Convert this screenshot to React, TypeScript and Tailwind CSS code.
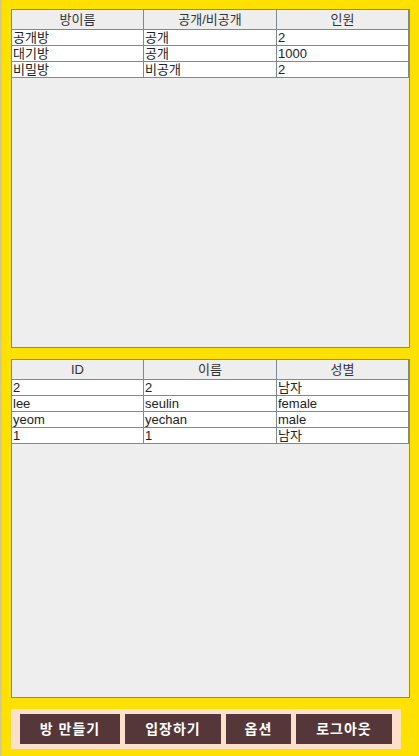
import React from "react";

const font = { fontFamily: '"Liberation Sans", "Noto Sans CJK KR", sans-serif' };

type Row = string[];

function Table({ headers, rows }: { headers: string[]; rows: Row[] }) {
  return (
    <div className="h-[339px] w-[399px] border border-[#7a8a99] bg-[#eeeeee] overflow-hidden">
      <div className="grid grid-cols-[132px_133px_132px] bg-[#eeeeee] border-b border-[#7a8a99]">
        {headers.map((h) => (
          <div
            key={h}
            className="h-[19px] flex items-center justify-center text-[13px] text-[#333333] border-r border-[#7a8a99]"
          >
            {h}
          </div>
        ))}
      </div>
      {rows.map((r, ri) => (
        <div key={ri} className="grid grid-cols-[132px_133px_132px] bg-white border-b border-[#7a8a99]">
          {r.map((c, ci) => (
            <div
              key={ci}
              className="h-[15px] flex items-center pl-[1px] text-[13px] leading-none text-[#222222] border-r border-[#7a8a99]"
            >
              {c}
            </div>
          ))}
        </div>
      ))}
    </div>
  );
}

export default function App() {
  const buttons = [
    { label: "방 만들기", w: "w-[100px]" },
    { label: "입장하기", w: "w-[96px]" },
    { label: "옵션", w: "w-[65px]" },
    { label: "로그아웃", w: "w-[96px]" },
  ];

  return (
    <div className="w-[419px] h-[756px] bg-[#ffe100] flex" style={font}>
      <div className="w-[2px] h-full bg-[#cfc8a8]" />
      <div className="flex flex-col pl-[9px] pt-[9px]">
        <Table
          headers={["방이름", "공개/비공개", "인원"]}
          rows={[
            ["공개방", "공개", "2"],
            ["대기방", "공개", "1000"],
            ["비밀방", "비공개", "2"],
          ]}
        />
        <div className="h-[11px]" />
        <Table
          headers={["ID", "이름", "성별"]}
          rows={[
            ["2", "2", "남자"],
            ["lee", "seulin", "female"],
            ["yeom", "yechan", "male"],
            ["1", "1", "남자"],
          ]}
        />
        <div className="h-[11px]" />
        <div className="w-[390px] h-[40px] bg-[#fce0cc] flex items-center justify-center gap-[5px]">
          {buttons.map((b) => (
            <button
              key={b.label}
              className={`${b.w} h-[30px] bg-[#553739] text-white font-semibold text-[14px] tracking-[1px] flex items-center justify-center`}
            >
              {b.label}
            </button>
          ))}
        </div>
      </div>
    </div>
  );
}
